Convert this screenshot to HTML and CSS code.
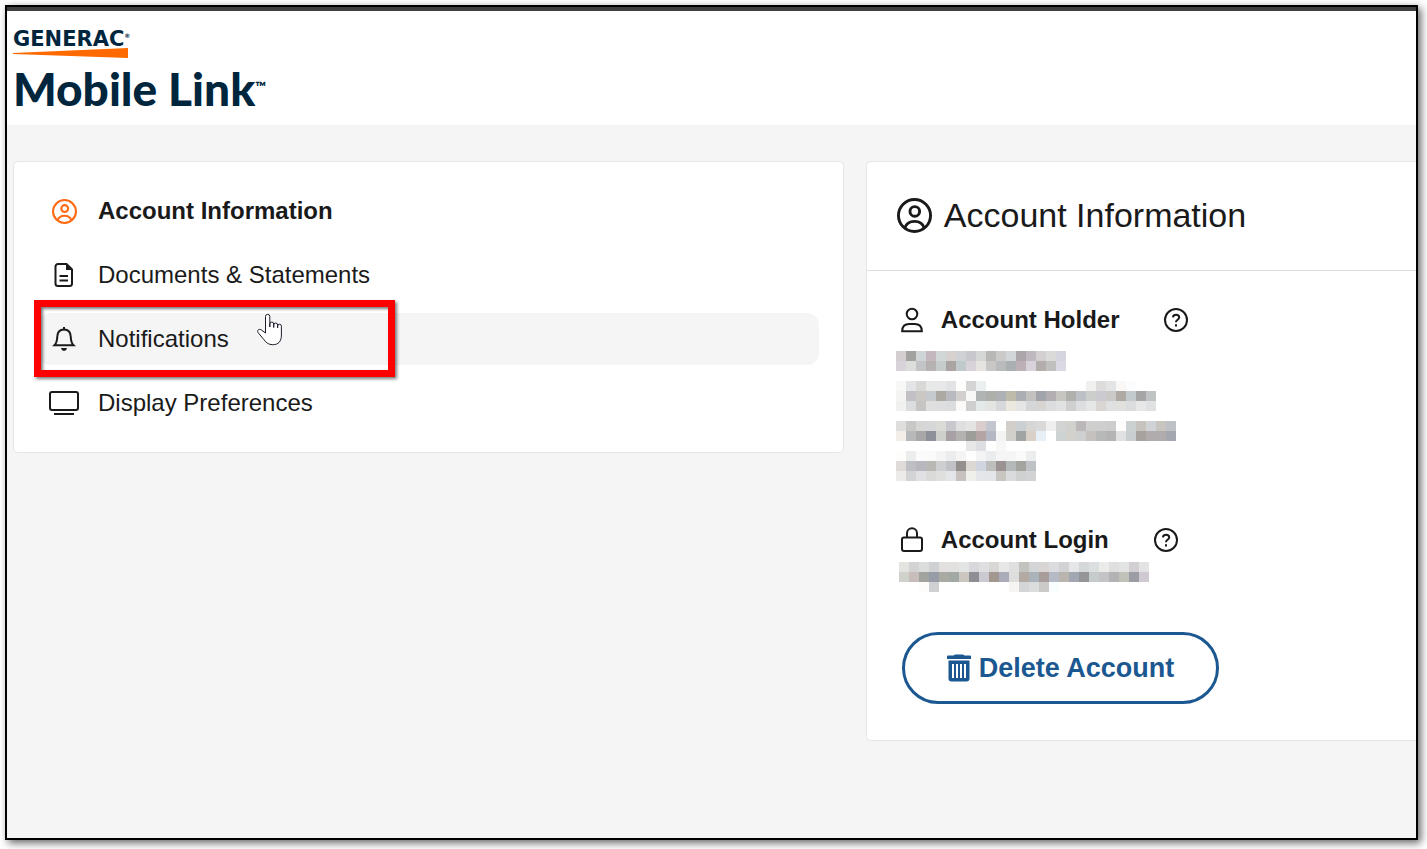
FILE: index.html
```html
<!DOCTYPE html>
<html lang="en">
<head>
<meta charset="utf-8">
<meta name="viewport" content="width=device-width, initial-scale=1">
<title>Generac Mobile Link</title>
<link rel="stylesheet" href="styles.css">
</head>
<body>
<svg class="defs" aria-hidden="true">
  <symbol id="user-circle" viewBox="0 0 24 24">
    <circle cx="12" cy="12" r="11" />
    <circle cx="12.2" cy="9.2" r="3.3" />
    <path d="M5.3 20.6c.9-3 3.300-4.600 6.700-4.600s5.800 1.600 6.700 4.600" />
  </symbol>
  <symbol id="help" viewBox="0 0 24 24">
    <circle cx="12" cy="12" r="11" />
    <path d="M8.900 9.300c.3-1.700 1.500-2.500 3.200-2.500 1.800 0 3.100 1 3.100 2.600 0 2.300-3.200 2.300-3.200 4.500v.4" />
    <path d="M12 16.200v2.200" />
  </symbol>
</svg>
<div class="frame">
  <div class="strip"></div>
  <header class="header">
    <a class="logo" href="#" aria-label="Generac Mobile Link">
      <span class="maker">GENERAC<span class="reg">®</span></span>
      <svg class="swoosh" viewBox="0 0 115 10" aria-hidden="true"><path d="M0 5L115 0V10L0 6Z" /></svg>
      <span class="product">Mobile Link<span class="tm">™</span></span>
    </a>
  </header>
  <main class="content">
    <nav class="card">
      <ul class="menu">
        <li><a class="item current" href="#"><svg class="icon accent" width="25" height="25"><use href="#user-circle" /></svg>Account Information</a></li>
        <li><a class="item" href="#"><svg class="icon" width="20" height="26" viewBox="0 0 20 26"><path d="M4 2H12.500L18 7.500V21.500a2.500 2.500 0 0 1-2.500 2.500H4a2.500 2.500 0 0 1-2.500-2.500V4.500A2.500 2.500 0 0 1 4 2Z" /><path class="solid" d="M12 2V8H18.300Z" /><path d="M5.500 14H14M5.500 18.500H14" /></svg>Documents &amp; Statements</a></li>
        <li class="marked"><a class="item hover" href="#"><svg class="icon" width="22" height="26" viewBox="0 0 22 26"><path d="M1.500 19.300C3.900 17 4.100 14.500 4.300 10.500 4.500 6 7 3.400 11 3.400s6.500 2.600 6.700 7.100c.2 4 .4 6.500 2.800 8.800Z" /><path d="M11 1v2" /><path class="solid" d="M8 22h6c-.5 2-1.500 2.800-3 2.800S8.500 24 8 22Z" /></svg>Notifications</a>
          <span class="highlight"></span>
          <svg class="pointer" width="28" height="34" viewBox="0 0 28 34" aria-hidden="true"><path d="M9.500 20V3.500a2.100 2.100 0 0 1 4.300 0V14v-3a1.900 1.900 0 0 1 3.900 0v3.500-2.500a1.900 1.900 0 0 1 3.900 0v3-1.800a1.900 1.900 0 0 1 3.800 0V22c0 6.500-3 9.700-8.700 9.700-4.200 0-6.500-2-8.700-5L2 19.500c-1.200-2.500 1-3.800 3-2.800Z" /></svg>
        </li>
        <li><a class="item" href="#"><svg class="icon" width="30" height="26" viewBox="0 0 30 26"><rect x="1" y="2" width="28" height="18" rx="2" /><path d="M5 24H25" /></svg>Display Preferences</a></li>
      </ul>
    </nav>
    <section class="card account">
      <h1 class="title"><svg width="35" height="35"><use href="#user-circle" /></svg>Account Information</h1>
      <div class="details">
        <section class="group">
          <h2 class="subtitle"><svg width="22" height="26" viewBox="0 0 22 26"><circle cx="11" cy="7" r="5.300" /><path d="M1.200 24.200c0-4.600 2.800-7.200 7-7.200h5.600c4.200 0 7 2.600 7 7.200Z" /></svg>Account Holder
            <button class="help" type="button" aria-label="About account holder"><svg width="24" height="24"><use href="#help" /></svg></button></h2>
          <svg class="mosaic" data-mosaic="holder" aria-hidden="true"></svg>
        </section>
        <section class="group">
          <h2 class="subtitle"><svg width="22" height="26" viewBox="0 0 22 26"><rect x="1" y="10.500" width="20" height="13.500" rx="2" /><path d="M6 10.500V6.200a5 5 0 0 1 10 0v4.300" /></svg>Account Login
            <button class="help" type="button" aria-label="About account login"><svg width="24" height="24"><use href="#help" /></svg></button></h2>
          <svg class="mosaic login" data-mosaic="login" aria-hidden="true"></svg>
        </section>
        <button class="delete" type="button"><svg width="24" height="28" viewBox="0 0 24 28" aria-hidden="true"><path fill-rule="evenodd" d="M0 2.500Q0 1.500 1 1.500H6.500L8 .5h8l1.500 1H23q1 0 1 1V5H0ZM1.500 6.500h21V24.500q0 3-3 3h-15q-3 0-3-3ZM5 10V24H7V10ZM9 10V24h2V10ZM13 10V24h2V10ZM17 10V24h2V10Z" /></svg>Delete Account</button>
      </div>
    </section>
  </main>
</div>
<script src="mosaic.js"></script>
</body>
</html>
```
FILE: styles.css
```css
* { box-sizing: border-box; }

body {
  margin: 0;
  padding: 5px 9px 9px 5px;
  background: #fff;
  color: #1a1a1a;
  font-family: "Liberation Sans", Arial, sans-serif;
}

.defs { position: absolute; width: 0; height: 0; }

svg { flex: none; fill: none; stroke: currentColor; stroke-width: 2; overflow: visible; }

.frame {
  display: flex;
  flex-direction: column;
  min-height: calc(100vh - 14px);
  border: 2px solid #000;
  background: #f5f5f5;
  box-shadow: 3px 3px 8px rgba(0, 0, 0, .6);
}

.strip { height: 4px; background: #3f3f3f; }

.header { display: flex; padding: 19px 6px 14px; background: #fff; }

.logo {
  display: flex;
  flex-direction: column;
  align-items: flex-start;
  color: #00263e;
  text-decoration: none;
}
.maker { height: 18px; font: bold 21px/18px "DejaVu Sans", sans-serif; }
.reg { font-size: 6px; line-height: 6px; vertical-align: 8px; }
.swoosh { width: 115px; height: 10px; fill: #ff6a00; stroke: none; }
.product { height: 53px; padding-top: 4px; font: 900 46px/53px Lato, sans-serif; }
.tm { font-size: 14px; line-height: 14px; vertical-align: 14px; }

.content {
  display: grid;
  grid-template-columns: 151fr 100fr;
  gap: 22px;
  align-items: start;
  padding: 36px 0 36px 6px;
}

.card { border: 1px solid #e6e6e6; border-radius: 5px; background: #fff; }

.menu {
  display: flex;
  flex-direction: column;
  gap: 12px;
  margin: 0;
  padding: 23px 24px;
  list-style: none;
}
.item {
  display: grid;
  grid-template-columns: 30px 1fr;
  gap: 19px;
  align-items: center;
  height: 52px;
  padding-left: 11px;
  border-radius: 12px;
  color: inherit;
  font-size: 24px;
  text-decoration: none;
}
.icon { justify-self: center; }
.current { font-weight: bold; }
.accent { color: #ff6a13; }
.hover { background: #f5f5f5; }
.solid { fill: currentColor; stroke: none; }

.marked { position: relative; }
.highlight {
  position: absolute;
  top: -13px;
  left: -4px;
  width: 361px;
  height: 77px;
  border: 7px solid #f00;
  box-shadow: 2px 2px 3px rgba(0, 0, 0, .5), inset 2px 2px 3px rgba(0, 0, 0, .5);
  pointer-events: none;
}
.pointer { position: absolute; top: 0; left: 218px; fill: #fff; stroke: #1b1b2b; stroke-width: 1; }

.account { border-right: 0; border-radius: 5px 0 0 5px; }
.title {
  display: flex;
  align-items: center;
  gap: 12px;
  height: 109px;
  margin: 0;
  padding: 0 30px 2px;
  border-bottom: 1px solid #ddd;
  font-size: 34px;
  font-weight: normal;
}
.details { padding: 29px 29px 36px; }
.group + .group { margin-top: 39px; }
.subtitle {
  display: flex;
  align-items: center;
  gap: 18px;
  height: 40px;
  margin: 0;
  padding-left: 5px;
  font-size: 24px;
}
.help {
  display: flex;
  margin-left: 27px;
  padding: 0;
  border: 0;
  background: none;
  color: inherit;
}
.mosaic { display: block; margin-top: 11px; stroke: none; shape-rendering: crispEdges; }
.login { margin: 2px 0 0 3px; }

.delete {
  display: flex;
  align-items: center;
  gap: 8px;
  height: 72px;
  margin: 40px 0 0 6px;
  padding: 0 42px;
  border: 3px solid #1b5790;
  border-radius: 36px;
  background: #fff;
  color: #1b5790;
  font: bold 27px "Liberation Sans", Arial, sans-serif;
}
.delete svg { fill: currentColor; stroke: none; }
```
FILE: mosaic.js
```js
// Obscured account details: one hex colour per 10px cell, "." for an empty cell, ".n" for n empty cells.
const CELL = 10;
const mosaics = {
  holder: [
    "d4ced0 a2a2a0 cfd4d6 c4b8be d1d7d6 d6d0cf cfd1d5 c8c7ce d5d6d6 b7b7b5 cbcac8 d3d6d8 aca5aa c0b8bf d3cfd1 dadad8 d5d6dd",
    "d8d3da dddedb c3c4c7 b7b2b2 c6cbcb aaa5a3 c0c9cc d7d3d8 e7e3e1 c8c7c6 b8babc a8b0b2 bdb0b7 d8d3da b3adab c0c0be dad9e4",
    ".",
    "f7f7f5 e3e4e6 d8d8d7 e7e8e8 e8e8e8 e2e3e5 fdfdfb d4d4d4 ebeff0 .10 f0f0ef dddcda e3e4e6 faf8f6 fbfcfe",
    "f4f4f3 c2c0c5 cbc7c2 c4cace aca8a2 b9bac0 d3cfcf f8f8f6 b0b5b4 adafab adb1b5 bfbbab abaeb3 c2c1bf a2a4ab b2aeb1 c6c5c0 b0b0ad bdc0c6 cccecb cbcad0 cbc8c8 aeaaa3 c3cace a5a5a5 c0c3c4",
    "f1f1f0 dcdde0 c6c5c3 dfdfdf dedede dbdcde faf9f7 cfcfcf e3e8e9 e4e4e2 d6d8da ebe8e0 e4e5e4 d5d6d7 d8d4d2 dcdddf e0e1e3 cfcfcf dddee0 e5e7e7 d8d5d3 dfe0e1 e0e0dc dbdcde e7e7e7 dfe1e3",
    ".",
    "dfdedc c8c8c6 d6d6d5 d6d7d9 dadbd7 cac8cf dfdfdf e4e4e2 d9cecd c4c6cf . d2cfca c9d0d3 d6d6d4 d9d9d9 f0efef d2d4d3 d1d2ce bcb7b8 cfcfcd cecece cdcdcd fefdfc cbd0d0 c6c2bc d0d3d6 c8c5c0 bec1c5",
    "f3eee8 b6b8ba a8a8a8 8e919a ced1cb a7a1a5 b4b2b1 9d9e9a b4a4a4 b4b7c4 f4f4f4 d2d0ca a0a4a3 d9d1c7 e7eff7 . cdd3d2 d2d1cc cecfcf c5c1bf b7b9b8 b4b4b4 e0e1e3 c9cfd0 a8a29e b1abab b0acad a5a7b0",
    ".7 e8e7e7 dddfe2 . f7f7f7",
    "fdfdfb eceeed fbfbfb fafafa f4f4f4 eaecee f4f4f4 fefefe f4f4f4 eaecee f5f5f5 f5f5f5 fafafa eceeee",
    "dfdbd8 bdbfc5 b9b7be b9b8b4 cdcfd1 c0c2c6 938f8c dad8d1 d0d6df bebfbd 9b9294 b3b9b9 a3a3a0 bec1c5",
    "edeaea d1d3d5 e1e0e5 dadad8 dfdfdd e3e5e8 c7c2c0 f0f0eb e5e6ea e3e5e9 c9c6c2 d9dbdd cfd0d0 d2d3d5"
  ],
  login: [
    "e3e3e0 d2d3d2 dadddb cfd0d2 e2e1df e2e1e0 e3e5e4 d8d8dc dfdfe1 d8d7d6 e7e7e7 dfdfe0 c2c2be d2d4d6 d9d5d5 dcdce0 d2d2d4 e4e6e7 d5d8d8 dbdfdf ebebe9 e0dfdf e1e4e3 d1cfd2 e3e3e3",
    "ced2ca c9bdbb a1a49e 989ca6 a9aaa3 a2a8a4 cbc6bf 8e8f94 cbc9d1 a2988f abacb9 dedede b3aaa4 aab3ba a89d9b b6bac7 bab4ae a2a7b1 959597 c6cccb c4c3c5 b3b3b6 c0c2ba 9c9ca4 cfcad2",
    ".2 fdfcfb cfd0d2 .7 f6f5f4 d3d5d7 dbdddc cccac9 f8fdfd"
  ]
};

for (const svg of document.querySelectorAll("[data-mosaic]")) {
  const rows = mosaics[svg.dataset.mosaic];
  let columns = 0;
  rows.forEach((row, y) => {
    let x = 0;
    for (const cell of row.split(" ")) {
      if (cell[0] === ".") {
        x += Number(cell.slice(1)) || 1;
        continue;
      }
      const rect = document.createElementNS("http://www.w3.org/2000/svg", "rect");
      rect.setAttribute("x", x * CELL);
      rect.setAttribute("y", y * CELL);
      rect.setAttribute("width", CELL);
      rect.setAttribute("height", CELL);
      rect.setAttribute("fill", "#" + cell);
      svg.append(rect);
      x += 1;
    }
    columns = Math.max(columns, x);
  });
  svg.setAttribute("width", columns * CELL);
  svg.setAttribute("height", rows.length * CELL);
}
```
